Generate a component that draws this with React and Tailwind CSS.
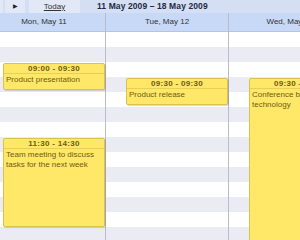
const days = [
  {
    label: "Mon, May 11",
    events: [
      { time: "09:00 - 09:30", text: "Product presentation", top: "top-[31px]", h: "h-[27px]" },
      { time: "11:30 - 14:30", text: "Team meeting to discuss tasks for the next week", top: "top-[106px]", h: "h-[89px]" },
    ],
  },
  {
    label: "Tue, May 12",
    events: [{ time: "09:30 - 09:30", text: "Product release", top: "top-[46px]", h: "h-[27px]" }],
  },
  {
    label: "Wed, May 13",
    events: [{ time: "09:30 - 17:00", text: "Conference business technology", top: "top-[46px]", h: "h-[240px]" }],
  },
];

const rows = Array.from({ length: 14 }, (_, i) => i);

const EventCard = ({ ev }) => (
  <div
    className={`absolute left-[20px] w-[102px] ${ev.top} ${ev.h} bg-[#ffe767] border border-[#dcc24a] rounded-[2px] shadow-[1px_1px_1px_rgba(0,0,0,0.15)] text-[#6e5d16] overflow-hidden`}
  >
    <div className="h-[10px] border-b border-[#e8cf58] text-center text-[8px] leading-[10px] font-bold tracking-[0.3px]">
      {ev.time}
    </div>
    <div className="px-[2px] pt-[1px] text-[8px] leading-[10px]">{ev.text}</div>
  </div>
);

const App = () => {
  return (
    <div className="w-[300px] h-[240px] overflow-hidden bg-white font-['Liberation_Sans',sans-serif]">
      {/* TOOLBAR */}
      <div className="h-[13px] bg-[#d5dff4] flex items-stretch">
        <div className="w-[3px] bg-[#e2e8f5]" />
        <div className="ml-[2px] w-[20px] bg-[#e2e8f5] flex items-center justify-center">
          <span className="text-[6px] text-[#222]">▶</span>
        </div>
        <div className="ml-[4px] w-[51px] bg-[#e2e8f5] flex items-center justify-center">
          <span className="text-[8px] underline text-[#333]">Today</span>
        </div>
        <div className="ml-[17px] flex items-center text-[8.5px] font-bold text-[#1f2a44] tracking-[0.1px]">
          11 May 2009 – 18 May 2009
        </div>
      </div>

      {/* DAY COLUMNS */}
      <div className="flex ml-[-17px]">
        {days.map((day, d) => (
          <div key={d} className="w-[123px] shrink-0 border-r border-[#b9bccb]">
            <div className="h-[19px] bg-[#c8d9f7] border-b border-[#b3c4e6] flex items-center justify-center text-[8px] text-[#333]">
              {day.label}
            </div>
            <div className="relative">
              {rows.map((r) => (
                <div key={r} className={r % 2 === 0 ? "h-[15px] bg-white" : "h-[15px] bg-[#ebecf3]"} />
              ))}
              {day.events.map((ev, i) => (
                <EventCard key={i} ev={ev} />
              ))}
            </div>
          </div>
        ))}
      </div>
    </div>
  );
};

export default App;
